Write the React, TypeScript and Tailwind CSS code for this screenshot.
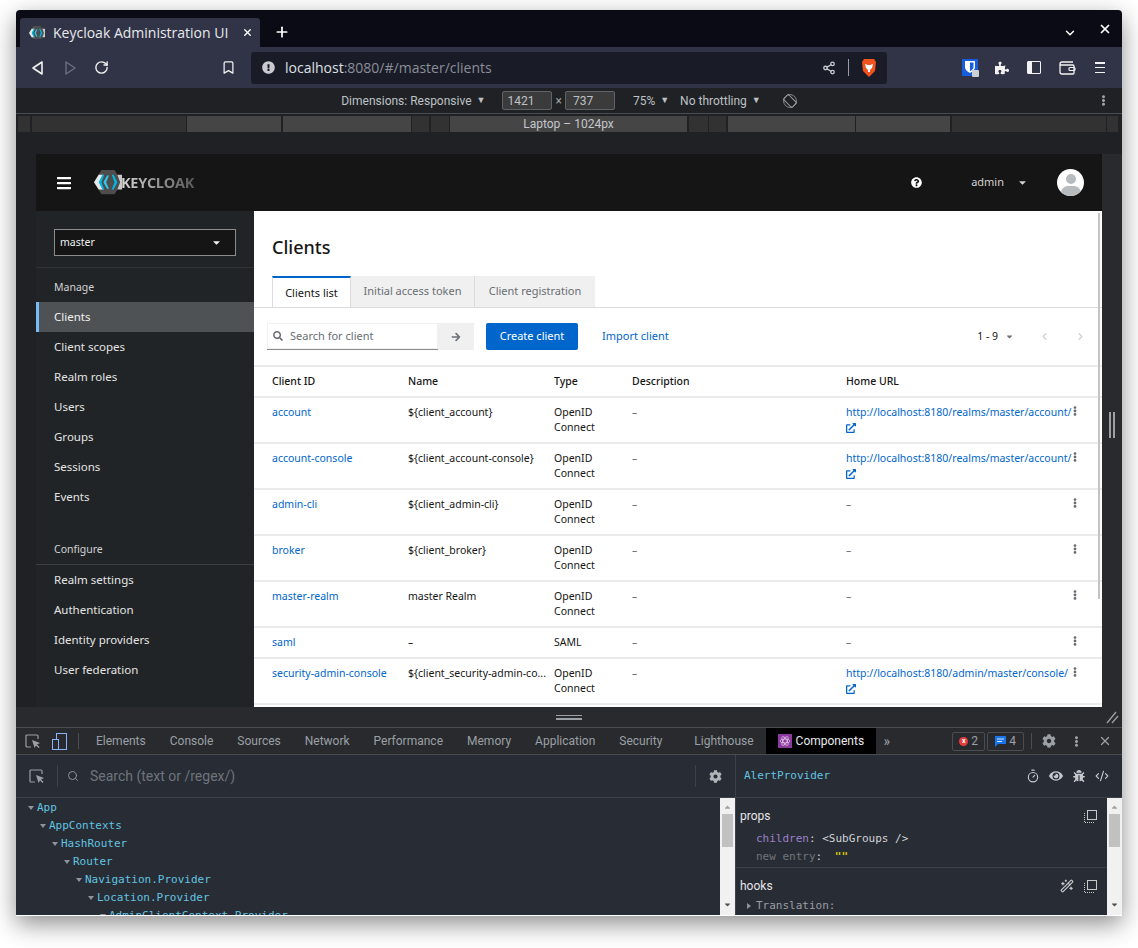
import { Bell, Bookmark, ChevronDown, ChevronLeft, ChevronRight, Plus, RotateCw, Share2, Timer, Eye, Bug, Code2, Wand2, X, Search, ArrowRight } from "lucide-react";
import { FaCog, FaPuzzlePiece, FaEllipsisV, FaExternalLinkAlt, FaSearch, FaArrowRight, FaCaretDown, FaBars, FaExclamationCircle, FaQuestionCircle, FaBug, FaEye } from "react-icons/fa";

const rulerSegments = [
  { w: "w-[12px]", c: "bg-[#323232]" },
  { w: "w-[154px]", c: "bg-[#323232]" },
  { w: "w-[94px]", c: "bg-[#454545]" },
  { w: "w-[128px]", c: "bg-[#454545]" },
  { w: "w-[17px]", c: "bg-[#323232]" },
  { w: "w-[18px]", c: "bg-[#323232]" },
  { w: "w-[237px]", c: "bg-[#454545]", label: "Laptop – 1024px" },
  { w: "w-[19px]", c: "bg-[#323232]" },
  { w: "w-[17px]", c: "bg-[#323232]" },
  { w: "w-[127px]", c: "bg-[#454545]" },
  { w: "w-[94px]", c: "bg-[#454545]" },
  { w: "w-[154px]", c: "bg-[#323232]" },
  { w: "w-[11px]", c: "bg-[#323232]" },
];

const manageItems = ["Clients", "Client scopes", "Realm roles", "Users", "Groups", "Sessions", "Events"];
const configureItems = ["Realm settings", "Authentication", "Identity providers", "User federation"];

const clients = [
  { id: "account", name: "${client_account}", type: "OpenID Connect", url: "http://localhost:8180/realms/master/account/" },
  { id: "account-console", name: "${client_account-console}", type: "OpenID Connect", url: "http://localhost:8180/realms/master/account/" },
  { id: "admin-cli", name: "${client_admin-cli}", type: "OpenID Connect" },
  { id: "broker", name: "${client_broker}", type: "OpenID Connect" },
  { id: "master-realm", name: "master Realm", type: "OpenID Connect" },
  { id: "saml", name: "–", type: "SAML" },
  { id: "security-admin-console", name: "${client_security-admin-co...", type: "OpenID Connect", url: "http://localhost:8180/admin/master/console/" },
  { id: "security-admin-console", name: "", type: "OpenID Connect", url: "http://localhost:8080/" },
];

const devtoolsTabs = ["Elements", "Console", "Sources", "Network", "Performance", "Memory", "Application", "Security"];

const tree = [
  { name: "App", pl: "pl-[12px]" },
  { name: "AppContexts", pl: "pl-[24px]" },
  { name: "HashRouter", pl: "pl-[36px]" },
  { name: "Router", pl: "pl-[48px]" },
  { name: "Navigation.Provider", pl: "pl-[60px]" },
  { name: "Location.Provider", pl: "pl-[72px]" },
  { name: "AdminClientContext.Provider", pl: "pl-[84px]" },
];

const KeycloakMark = ({ size = 30 }: { size?: number }) => (
  <svg width={size} height={(size * 26) / 30} viewBox="0 0 30 26">
    <path d="M8 0h14l8 13-8 13H8L0 13z" fill="#4d4d4d" />
    <path d="M0 13 5 5h5l-4 8 4 8H5z" fill="#e8e8e8" />
    <path d="M11 5h-2l-4 8 4 8h2l-3-8z" fill="#00b8e3" />
    <path d="M19 5h2l4 8-4 8h-2l3-8z" fill="#00b8e3" />
    <path d="M14 6l-4 7 4 7h2l-3-7 3-7z" fill="#33c6e9" />
    <path d="M25 5h5v16h-5l3-8z" fill="#c8c8c8" />
  </svg>
);

const InspectIcon = () => (
  <svg width="16" height="16" viewBox="0 0 16 16" fill="none">
    <path d="M6 14H2a1 1 0 0 1-1-1V3a1 1 0 0 1 1-1h10a1 1 0 0 1 1 1v3" stroke="#9aa0a6" strokeWidth="1.2" />
    <path d="M7 7l8 3-3 1.4L14.6 14l-1 1-2.6-2.6L9.6 15z" fill="#9aa0a6" />
  </svg>
);

const CopyIcon = () => (
  <svg width="13" height="13" viewBox="0 0 13 13" fill="none">
    <rect x="3.5" y="0.5" width="9" height="9" stroke="#c8c8c8" />
    <path d="M0.5 3v9.5H10" stroke="#c8c8c8" strokeDasharray="1 1" />
  </svg>
);

function BrowserChrome() {
  return (
    <>
      {/* Tab strip */}
      <div className="flex h-[37px] items-end justify-between bg-[#0a0b14] pl-[4px] pr-[10px]">
        <div className="flex items-end">
          <div className="flex h-[29px] w-[240px] items-center justify-between rounded-t-[3px] bg-[#303446] pl-[9px] pr-[7px]">
            <div className="flex items-center gap-[8px]">
              <KeycloakMark size={16} />
              <span className="font-['Open_Sans',sans-serif] text-[14px] text-[#e8e8ec]">Keycloak Administration UI</span>
            </div>
            <X size={11} strokeWidth={3} className="text-white" />
          </div>
          <Plus size={16} strokeWidth={2.6} className="mb-[7px] ml-[14px] text-white" />
        </div>
        <div className="mb-[7px] flex items-center gap-[21px] text-white">
          <ChevronDown size={14} strokeWidth={2.5} className="mt-[2px]" />
          <X size={14} strokeWidth={3} className="-mt-[7px]" />
        </div>
      </div>

      {/* Toolbar */}
      <div className="flex h-[41px] items-center bg-[#303446] pl-[15px]">
        <svg width="14" height="16" viewBox="0 0 14 16" fill="none">
          <path d="M11 2v12L2 8z" stroke="#f2f2f2" strokeWidth="1.6" strokeLinejoin="round" />
        </svg>
        <svg width="14" height="16" viewBox="0 0 14 16" fill="none" className="ml-[18px]">
          <path d="M3 2v12l9-6z" stroke="#6b6f7e" strokeWidth="1.4" strokeLinejoin="round" />
        </svg>
        <RotateCw size={15} strokeWidth={2.2} className="ml-[17px] text-[#f2f2f2]" />
        <Bookmark size={15} strokeWidth={2} className="ml-[112px] text-[#f2f2f2]" />
        <div className="ml-[15px] flex h-[32px] w-[636px] items-center rounded-[3px] bg-[#191c27] pl-[11px] pr-[10px]">
          <FaExclamationCircle size={13} className="text-[#c8cad0]" />
          <span className="ml-[10px] font-['Open_Sans',sans-serif] text-[14px] text-[#dfe0e4]">
            localhost<span className="text-[#8b8e98]">:8080/#/master/clients</span>
          </span>
          <Share2 size={14} strokeWidth={2.2} className="ml-auto text-[#c8cad0]" />
          <div className="mx-[12px] h-[17px] w-px bg-[#9a9ca6]" />
          <svg width="16" height="20" viewBox="0 0 16 20">
            <path d="M3 1h10l2 3-1 9-6 6-6-6-1-9z" fill="#f1521e" />
            <path d="M4 6l3 1h2l3-1-1 4-2 2v2H7v-2L5 10z" fill="#ffffff" />
          </svg>
        </div>
        <div className="relative ml-[75px]">
          <svg width="16" height="17" viewBox="0 0 16 17">
            <rect width="16" height="17" fill="#175ddc" />
            <path d="M3 2h10v6c0 3-3 5-5 6-2-1-5-3-5-6z" fill="#ffffff" />
            <path d="M8 3.5h3.5V8c0 2-2 3.5-3.500 4.200z" fill="#175ddc" />
          </svg>
          <span className="absolute -bottom-[1px] -right-[1px] h-[7px] w-[7px] rounded-[1px] bg-[#cfd0d4]" />
        </div>
        <FaPuzzlePiece size={14} className="ml-[17px] text-[#f2f2f2]" />
        <div className="ml-[18px] flex h-[13px] w-[14px] rounded-[1px] border-[1.5px] border-[#f2f2f2]">
          <div className="w-[4px] bg-[#f2f2f2]" />
        </div>
        <svg width="17" height="14" viewBox="0 0 17 14" fill="none" className="ml-[18px]">
          <path d="M3 1h11M1 3v8a2 2 0 0 0 2 2h11a1 1 0 0 0 1-1V5a1 1 0 0 0-1-1H3a2 2 0 0 1-2-1 2 2 0 0 1 2-2" stroke="#f2f2f2" strokeWidth="1.3" />
          <rect x="10" y="6.500" width="6" height="3" rx="1" stroke="#f2f2f2" strokeWidth="1.200" />
        </svg>
        <div className="ml-[19px] flex h-[11px] w-[10px] flex-col justify-between">
          <span className="h-[1.5px] bg-[#f2f2f2]" />
          <span className="h-[1.5px] bg-[#f2f2f2]" />
          <span className="h-[1.5px] bg-[#f2f2f2]" />
        </div>
      </div>
    </>
  );
}

function DeviceToolbar() {
  return (
    <>
      <div className="relative flex h-[26px] items-center justify-center border-b border-[#494c50] bg-[#202124] pr-[0px] font-['Roboto',sans-serif] text-[12px] text-[#bdc1c6]">
        <div className="ml-[0px] flex items-center">
          <span>Dimensions: Responsive</span>
          <span className="ml-[5px] text-[9px]">▼</span>
          <div className="ml-[17px] flex h-[19px] w-[50px] items-center rounded-[2px] border border-[#5f6368] bg-[#3b3b3b] pl-[4px]">1421</div>
          <span className="mx-[3px] text-[#9aa0a6]">×</span>
          <div className="flex h-[19px] w-[50px] items-center rounded-[2px] border border-[#5f6368] bg-[#3b3b3b] pl-[7px]">737</div>
          <span className="ml-[18px]">75%</span>
          <span className="ml-[5px] text-[9px]">▼</span>
          <span className="ml-[11px]">No throttling</span>
          <span className="ml-[5px] text-[9px]">▼</span>
          <svg width="14" height="14" viewBox="0 0 14 14" fill="none" className="ml-[22px]">
            <rect x="3.500" y="1" width="7" height="12" rx="1" transform="rotate(-45 7 7)" stroke="#9aa0a6" />
            <circle cx="7" cy="7" r="6.400" stroke="#9aa0a6" strokeWidth="0.800" />
          </svg>
        </div>
        <FaEllipsisV size={11} className="absolute right-[13px] text-[#9aa0a6]" />
      </div>
      <div className="bg-[#202124] pl-[2px] pr-[2px] pt-[2px]">
        <div className="flex h-[16px] gap-[1.500px]">
          {rulerSegments.map((s, i) => (
            <div key={i} className={`${s.w} ${s.c} flex items-center justify-center font-['Roboto',sans-serif] text-[12px] text-[#c4c7cc]`}>
              {s.label}
            </div>
          ))}
        </div>
      </div>
      <div className="h-[22px] bg-[#202124]" />
    </>
  );
}

function Sidebar() {
  return (
    <aside className="w-[218px] shrink-0 bg-[#212427] pt-[18px] text-[#e4e4e4]">
      <div className="mx-[18px] flex h-[27px] items-center justify-between border border-[#8a8d90] bg-[#151515] pl-[5px] pr-[13px] text-[10.500px] text-[#f0f0f0]">
        master
        <FaCaretDown size={11} />
      </div>
      <div className="mt-[11px] border-t border-[#2f3337] pl-[18px] pt-[13px] text-[10.500px] leading-[12px] text-[#d2d2d2]">Manage</div>
      <nav className="mt-[9px]">
        {manageItems.map((item) =>
          item === "Clients" ? (
            <div key={item} className="flex h-[30px] items-center border-l-[3px] border-[#73bcf7] bg-[#4f5255] pl-[15px] text-[11.500px] text-[#f0f0f0]">
              {item}
            </div>
          ) : (
            <div key={item} className="flex h-[30px] items-center pl-[18px] text-[11.500px] text-[#e4e4e4]">
              {item}
            </div>
          ),
        )}
      </nav>
      <div className="ml-[0px] mt-[31px] border-b border-[#3c3f42] pb-[9px] pl-[18px] text-[10.500px] leading-[12px] text-[#d2d2d2]">Configure</div>
      <nav>
        {configureItems.map((item) => (
          <div key={item} className="flex h-[30px] items-center pl-[18px] text-[11.500px] text-[#e4e4e4]">
            {item}
          </div>
        ))}
      </nav>
    </aside>
  );
}

function ClientRow({ client }: { client: (typeof clients)[number] }) {
  return (
    <div className="grid grid-cols-[136px_146px_78px_214px_224px_1fr] border-b-2 border-[#ebebeb] px-[18px] pb-[7px] pt-[7px] text-[10.500px] leading-[15px] text-[#151515]">
      <a className="text-[#0066cc]">{client.id}</a>
      <span className="whitespace-nowrap">{client.name}</span>
      <span className="w-[60px]">{client.type}</span>
      <span className="text-[#6a6e73]">–</span>
      {client.url ? (
        <a className="text-[#0066cc]">
          {client.url}
          <FaExternalLinkAlt size={10} className="mt-[3px] text-[#0066cc]" />
        </a>
      ) : (
        <span className="text-[#6a6e73]">–</span>
      )}
      <div className="flex justify-center pr-[4px] pt-[1px]">
        <FaEllipsisV size={10} className="text-[#6a6e73]" />
      </div>
    </div>
  );
}

function Main() {
  return (
    <main className="relative min-w-0 flex-1 overflow-hidden bg-white">
      <div className="absolute right-[2px] top-[2px] h-[386px] w-[2px] bg-[#c4c4c4]" />
      <h1 className="px-[18px] pb-[17px] pt-[24px] text-[18px] font-medium leading-[24px] text-[#151515]">Clients</h1>
      <div className="flex border-b border-[#dcdcdc] pl-[18px] text-[11px] leading-[29px]">
        <div className="w-[79px] border-x border-[#dcdcdc] border-t-2 border-t-[#0066cc] text-center text-[#151515]">Clients list</div>
        <div className="w-[124px] border-r border-[#dcdcdc] bg-[#f0f0f0] text-center text-[#6a6e73]">Initial access token</div>
        <div className="w-[120px] bg-[#f0f0f0] text-center text-[#6a6e73]">Client registration</div>
      </div>
      <div className="flex h-[59px] items-center border-b-2 border-[#ebebeb] pl-[13px] pr-[18px] text-[11px]">
        <div className="flex h-[27px] w-[171px] items-center gap-[7px] border-b border-[#8a8d90] pl-[6px] pr-[4px] shadow-[0_0_0_1px_#f0f0f0_inset] text-[#6a6e73]">
          <FaSearch size={10} className="text-[#6a6e73]" />
          Search for client
        </div>
        <div className="flex h-[27px] w-[36px] items-center justify-center bg-[#f0f0f0]">
          <FaArrowRight size={10} className="text-[#6a6e73]" />
        </div>
        <button className="ml-[12px] h-[27px] w-[92px] rounded-[2px] bg-[#0066cc] text-white">Create client</button>
        <a className="ml-[24px] text-[#0066cc]">Import client</a>
        <div className="ml-auto flex items-center text-[#151515]">
          <span className="text-[10.500px]">1 - 9</span>
          <FaCaretDown size={9} className="ml-[7px] text-[#6a6e73]" />
          <ChevronLeft size={11} strokeWidth={3} className="ml-[25px] text-[#d2d2d2]" />
          <ChevronRight size={11} strokeWidth={3} className="ml-[25px] mr-[-2px] text-[#d2d2d2]" />
        </div>
      </div>
      <div className="grid h-[31px] grid-cols-[136px_146px_78px_214px_224px_1fr] items-center border-b-2 border-[#ebebeb] px-[18px] text-[10.500px] font-medium text-[#151515]">
        <span>Client ID</span>
        <span>Name</span>
        <span>Type</span>
        <span>Description</span>
        <span>Home URL</span>
      </div>
      {clients.map((c, i) => (
        <ClientRow key={i} client={c} />
      ))}
    </main>
  );
}

function ResponsivePage() {
  return (
    <div className="flex h-[553px] bg-[#292a2d]">
      <div className="w-[20px] shrink-0 bg-[#202124]" />
      <div className="flex w-[1066px] shrink-0 flex-col font-['Noto_Sans',sans-serif]">
        <header className="flex h-[57px] shrink-0 items-center bg-[#151515] pl-[20px] pr-[18px] text-[#d2d2d2]">
          <FaBars size={16} className="text-white" />
          <div className="ml-[22px] flex items-center">
            <KeycloakMark size={28} />
            <span className="-ml-[1px] bg-gradient-to-r from-[#d8d8d8] to-[#5a5a5a] bg-clip-text font-['Open_Sans',sans-serif] text-[14.500px] font-bold tracking-[-0.300px] text-transparent">KEYCLOAK</span>
          </div>
          <FaQuestionCircle size={11} className="ml-auto text-white" />
          <span className="ml-[49px] text-[11px]">admin</span>
          <FaCaretDown size={11} className="ml-[13px] text-[#d2d2d2]" />
          <div className="relative ml-[29px] h-[27px] w-[27px] overflow-hidden rounded-full bg-white">
            <div className="absolute left-[8.500px] top-[5px] h-[10px] w-[10px] rounded-full bg-[#b8bbbe]" />
            <div className="absolute left-[3.500px] top-[17px] h-[14px] w-[20px] rounded-full bg-[#b8bbbe]" />
          </div>
        </header>
        <div className="flex min-h-0 flex-1 overflow-hidden">
          <Sidebar />
          <Main />
        </div>
      </div>
      <div className="flex w-[20px] items-center justify-center gap-[2px] pb-[8px]">
        <span className="mt-[-4px] h-[26px] w-[2px] bg-[#9aa0a6]" />
        <span className="mt-[-4px] h-[26px] w-[2px] bg-[#9aa0a6]" />
      </div>
    </div>
  );
}

function DevTools() {
  return (
    <>
      <div className="relative flex h-[20px] items-center justify-center bg-[#292a2d]">
        <div className="flex flex-col gap-[2px]">
          <span className="h-[1.500px] w-[26px] bg-[#9aa0a6]" />
          <span className="h-[1.500px] w-[26px] bg-[#9aa0a6]" />
        </div>
        <svg width="13" height="13" viewBox="0 0 13 13" className="absolute right-[3px] top-[4px]" stroke="#9aa0a6" strokeWidth="1.300">
          <path d="M1 12 10 1M6 12l6-7" />
        </svg>
      </div>
      <div className="flex h-[28px] items-stretch border-y border-[#494c50] bg-[#292a2d] font-['Roboto',sans-serif] text-[12px] text-[#9aa0a6]">
        <div className="flex w-[62px] items-center gap-[11px] pl-[9px]">
          <InspectIcon />
          <svg width="15" height="17" viewBox="0 0 15 17" fill="none">
            <rect x="4.500" y="0.500" width="10" height="16" stroke="#8ab4f8" />
            <rect x="0.500" y="6.500" width="6" height="10" stroke="#8ab4f8" fill="#292a2d" />
          </svg>
        </div>
        <div className="my-[5px] w-px bg-[#494c50]" />
        <div className="flex items-center gap-[24px] pl-[17px]">
          {devtoolsTabs.map((t) => (
            <span key={t}>{t}</span>
          ))}
        </div>
        <span className="ml-[32px] self-center">Lighthouse</span>
        <div className="ml-[12px] flex w-[110px] items-center bg-black pl-[12px] text-[#e8eaed]">
          <span className="flex h-[14px] w-[14px] items-center justify-center bg-[#8d3a9e]">
            <svg width="12" height="12" viewBox="-12 -11 24 22" fill="none" stroke="#e9d7ef" strokeWidth="1.300">
              <ellipse rx="10" ry="4" />
              <ellipse rx="10" ry="4" transform="rotate(60)" />
              <ellipse rx="10" ry="4" transform="rotate(120)" />
            </svg>
          </span>
          <span className="ml-[4px]">Components</span>
        </div>
        <span className="ml-[8px] self-center text-[14px] leading-none">»</span>
        <div className="ml-[62px] flex h-[19px] w-[33px] items-center self-center rounded-[2px] border border-[#494c50] pl-[6px]">
          <span className="flex h-[9px] w-[9px] items-center justify-center rounded-full bg-[#e53e3e] text-[7px] font-bold leading-none text-white">x</span>
          <span className="ml-[3px]">2</span>
        </div>
        <div className="ml-[2px] flex h-[19px] w-[37px] items-center self-center rounded-[2px] border border-[#494c50] pl-[7px]">
          <svg width="11" height="11" viewBox="0 0 11 11">
            <path d="M0 0h11v8H3l-3 3z" fill="#1a73e8" />
            <path d="M2 3h7M2 5.500h5" stroke="#ffffff" strokeWidth="0.800" />
          </svg>
          <span className="ml-[3px]">4</span>
        </div>
        <div className="my-[5px] ml-[7px] w-px bg-[#494c50]" />
        <FaCog size={14} className="ml-[10px] self-center" />
        <FaEllipsisV size={11} className="ml-[15px] self-center" />
        <X size={14} strokeWidth={2.200} className="ml-[16px] self-center" />
      </div>
      <div className="flex h-[160px] overflow-hidden bg-[#282c34] font-['DejaVu_Sans_Mono',monospace] text-[11px]">
        {/* Tree */}
        <div className="w-[719px] shrink-0">
          <div className="flex h-[43px] items-center border-b border-[#3d424a] pl-[13px] pr-[13px] font-['Roboto',sans-serif]">
            <InspectIcon />
            <div className="ml-[12px] h-[22px] w-px bg-[#3d424a]" />
            <Search size={12} className="ml-[9px] text-[#8f949c]" />
            <span className="ml-[11px] text-[14px] text-[#6f747c]">Search (text or /regex/)</span>
            <div className="ml-auto mr-[13px] h-[22px] w-px bg-[#3d424a]" />
            <FaCog size={13} className="text-[#b0b3b8]" />
          </div>
          <div className="flex h-[117px]">
            <div className="flex-1 pt-[1px]">
              {tree.map((n) => (
                <div key={n.name} className={`${n.pl} flex h-[18px] items-center text-[#61c4e0]`}>
                  <span className="mr-[3px] h-0 w-0 border-x-[3.500px] border-t-[4px] border-x-transparent border-t-[#8f949c]" />
                  {n.name}
                </div>
              ))}
            </div>
            <div className="relative w-[15px] bg-[#f1f1f1]">
              <div className="absolute left-[2px] top-[16px] h-[33px] w-[11px] bg-[#c1c1c1]" />
              <FaCaretDown size={9} className="absolute bottom-[6px] left-[3px] text-[#505050]" />
              <FaCaretDown size={9} className="absolute left-[3px] top-[5px] rotate-180 text-[#a3a3a3]" />
            </div>
          </div>
        </div>
        {/* Details */}
        <div className="min-w-0 flex-1 border-l border-[#3d424a]">
          <div className="flex h-[43px] items-center border-b border-[#3d424a] pl-[8px] pr-[13px] text-[#61c4e0]">
            AlertProvider
            <Timer size={14} className="ml-auto text-[#c5c8cc]" />
            <FaEye size={14} className="ml-[9px] text-[#c5c8cc]" />
            <FaBug size={12} className="ml-[10px] text-[#c5c8cc]" />
            <Code2 size={14} className="ml-[10px] text-[#c5c8cc]" />
          </div>
          <div className="flex h-[117px]">
            <div className="min-w-0 flex-1">
              <div className="h-[70px] border-b border-[#3d424a] pt-[9px]">
                <div className="flex items-center justify-between pl-[4px] pr-[10px] font-['Roboto',sans-serif] text-[12px] text-[#e4e6e9]">
                  props
                  <CopyIcon />
                </div>
                <div className="mt-[5px] pl-[20px] leading-[18px] text-[#d0d3d8]">
                  <div>
                    <span className="text-[#9b80c9]">children</span>: &lt;SubGroups /&gt;
                  </div>
                  <div className="text-[#6f747c]">
                    new entry<span className="text-[#d0d3d8]">:</span> <span className="ml-[6px] font-bold text-[#d4c400]">""</span>
                  </div>
                </div>
              </div>
              <div className="pt-[9px]">
                <div className="flex items-center pl-[4px] pr-[10px] font-['Roboto',sans-serif] text-[12px] text-[#e4e6e9]">
                  hooks
                  <Wand2 size={14} className="ml-auto mr-[10px] text-[#c5c8cc]" />
                  <CopyIcon />
                </div>
                <div className="mt-[3px] flex items-center pl-[11px] text-[#9a9ea5]">
                  <span className="mr-[5px] h-0 w-0 border-y-[3.500px] border-l-[4px] border-y-transparent border-l-[#8f949c]" />
                  Translation:
                </div>
              </div>
            </div>
            <div className="relative w-[15px] shrink-0 bg-[#f1f1f1]">
              <div className="absolute left-[2px] top-[16px] h-[33px] w-[11px] bg-[#c1c1c1]" />
              <FaCaretDown size={9} className="absolute bottom-[6px] left-[3px] text-[#505050]" />
              <FaCaretDown size={9} className="absolute left-[3px] top-[5px] rotate-180 text-[#a3a3a3]" />
            </div>
          </div>
        </div>
      </div>
    </>
  );
}

export default function App() {
  return (
    <div className="h-[948px] overflow-hidden bg-white pl-[16px] pt-[10px]">
      <div className="flex h-[906px] w-[1106px] flex-col overflow-hidden rounded-t-[4px] shadow-[0_8px_24px_rgba(0,0,0,0.45)]">
        <BrowserChrome />
        <DeviceToolbar />
        <ResponsivePage />
        <DevTools />
      </div>
    </div>
  );
}
